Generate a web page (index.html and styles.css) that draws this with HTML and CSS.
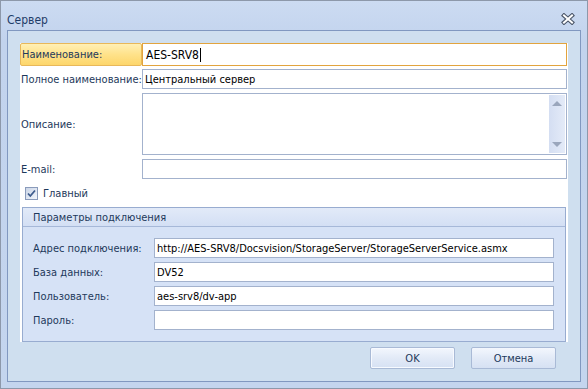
FILE: index.html
```html
<!DOCTYPE html>
<html lang="ru">
<head>
    <meta charset="UTF-8">
    <title>Сервер</title>
    <link rel="stylesheet" href="styles.css">
</head>
<body>

<div class="window">
    <!-- Title bar -->
    <div class="titlebar">
        <span class="title">Сервер</span>
        <svg class="close" width="14" height="12" viewBox="0 0 14 12">
            <path d="M3 2.5 L11 9.5 M11 2.5 L3 9.5" stroke="#4a5568" stroke-width="4.2" stroke-linecap="square"/>
            <path d="M3 2.5 L11 9.5 M11 2.5 L3 9.5" stroke="#ffffff" stroke-width="2" stroke-linecap="square"/>
        </svg>
    </div>

    <div class="frame">
        <div class="content">
            <div class="row row-main">
                <div class="caption active">Наименование:</div>
                <div class="field focused">AES-SRV8<span class="caret"></span></div>
            </div>
            <div class="row">
                <div class="caption">Полное наименование:</div>
                <div class="field">Центральный сервер</div>
            </div>
            <div class="row row-memo">
                <div class="caption">Описание:</div>
                <div class="field memo">
                    <div class="scrollbar">
                        <span class="arrow up"></span>
                        <span class="arrow down"></span>
                    </div>
                </div>
            </div>
            <div class="row">
                <div class="caption">E-mail:</div>
                <div class="field"></div>
            </div>

            <div class="check-row">
                <svg class="checkbox" width="13" height="13" viewBox="0 0 13 13">
                    <defs>
                        <linearGradient id="cb" x1="0" y1="0" x2="1" y2="1">
                            <stop offset="0" stop-color="#c9d4e6"/>
                            <stop offset="1" stop-color="#f4f7fc"/>
                        </linearGradient>
                    </defs>
                    <rect x="0.5" y="0.5" width="12" height="12" fill="url(#cb)" stroke="#8a9bbb"/>
                    <path d="M3 6.5 L5.3 9 L10 3.5" fill="none" stroke="#3e5c8c" stroke-width="1.8"/>
                </svg>
                <span>Главный</span>
            </div>

            <!-- Connection group -->
            <div class="group">
                <div class="group-header">Параметры подключения</div>
                <div class="group-body">
                    <div class="grow">
                        <div class="gcaption">Адрес подключения:</div>
                        <div class="field">http://AES-SRV8/Docsvision/StorageServer/StorageServerService.asmx</div>
                    </div>
                    <div class="grow">
                        <div class="gcaption">База данных:</div>
                        <div class="field">DV52</div>
                    </div>
                    <div class="grow">
                        <div class="gcaption">Пользователь:</div>
                        <div class="field">aes-srv8/dv-app</div>
                    </div>
                    <div class="grow">
                        <div class="gcaption">Пароль:</div>
                        <div class="field"></div>
                    </div>
                </div>
            </div>
        </div>

        <div class="buttons">
            <button class="btn default">OK</button>
            <button class="btn">Отмена</button>
        </div>
    </div>
</div>

</body>
</html>
```

FILE: styles.css
```css
body {
    margin: 0;
    font-family: "DejaVu Sans Condensed", "DejaVu Sans", sans-serif;
    font-size: 11px;
    color: #1e395b;
}
.window {
    width: 588px;
    height: 389px;
    box-sizing: border-box;
    border: 1px solid #8d98aa;
    background: linear-gradient(#ccdbf2, #c2d3ed 40px, #c4d5ee);
    display: flex;
    flex-direction: column;
}
.titlebar {
    height: 29px;
    box-sizing: border-box;
    padding: 9px 12px 0 6px;
    display: flex;
    align-items: center;
    justify-content: space-between;
}
.title {
    font-size: 12px;
    color: #1f3d68;
}
.close {
    margin-top: -2px;
}
.frame {
    flex: 1;
    margin: 0 6px 6px 6px;
    border: 1px solid #8198c0;
    background: #cfdfef;
    padding: 12px;
    display: flex;
    flex-direction: column;
}
.content {
    height: 299px;
    background: #ffffff;
    padding-right: 1px;
    box-sizing: border-box;
}
.row {
    display: flex;
    height: 20px;
    margin-top: 4px;
}
.row-main {
    height: 23px;
    margin-top: 0;
    margin-bottom: -1px;
}
.row-memo {
    height: 62px;
}
.caption {
    width: 122px;
    flex: none;
    box-sizing: border-box;
    padding-left: 1px;
    display: flex;
    align-items: center;
}
.caption.active {
    background: linear-gradient(#fff0b5, #ffe28a 50%, #fdd66b);
    border: 1px solid #e8b85a;
    border-radius: 2px;
}
.field {
    flex: 1;
    border: 1px solid #a3b2cd;
    background: #ffffff;
    color: #000000;
    padding-left: 2px;
    display: flex;
    align-items: center;
    white-space: nowrap;
    overflow: hidden;
}
.field.focused {
    border-color: #e2a43e;
    font-size: 12px;
    padding-left: 3px;
}
.caret {
    width: 1px;
    height: 14px;
    background: #000000;
    margin-left: 1px;
}
.memo {
    justify-content: flex-end;
    align-items: stretch;
    padding: 1px;
}
.scrollbar {
    width: 16px;
    background: linear-gradient(90deg, #d4def2, #e4ebf8);
    display: flex;
    flex-direction: column;
    justify-content: space-between;
    align-items: center;
    padding: 6px 0 6px;
}
.arrow {
    width: 0;
    height: 0;
    border-left: 5px solid transparent;
    border-right: 5px solid transparent;
}
.arrow.up {
    border-bottom: 5px solid #9aa6bc;
}
.arrow.down {
    border-top: 5px solid #9aa6bc;
}
.check-row {
    display: flex;
    align-items: center;
    gap: 5px;
    height: 14px;
    margin-top: 7px;
    padding-left: 5px;
}
.group {
    margin: 7px 0 0 2px;
    width: 544px;
    height: 135px;
    box-sizing: border-box;
    border: 1px solid #98acd0;
    background: #d6e2f6;
}
.group-header {
    height: 18px;
    border-bottom: 1px solid #a6b8d8;
    background: linear-gradient(#e2eaf8, #d3dff4);
    padding-left: 10px;
    display: flex;
    align-items: center;
}
.group-body {
    padding: 11px 11px 0 10px;
    display: flex;
    flex-direction: column;
    gap: 4px;
}
.grow {
    display: flex;
    height: 20px;
}
.gcaption {
    width: 121px;
    flex: none;
    display: flex;
    align-items: center;
}
.buttons {
    margin-top: 5px;
    margin-right: 12px;
    display: flex;
    justify-content: flex-end;
    gap: 16px;
}
.btn {
    width: 85px;
    height: 22px;
    font-family: inherit;
    font-size: 11px;
    color: #1e395b;
    border: 1px solid #a9bad6;
    border-radius: 2px;
    background: linear-gradient(#f3f7fd, #e2eaf7 50%, #d6e1f3);
}
.btn.default {
    box-shadow: inset 0 0 0 1px #f7faff;
}
```
